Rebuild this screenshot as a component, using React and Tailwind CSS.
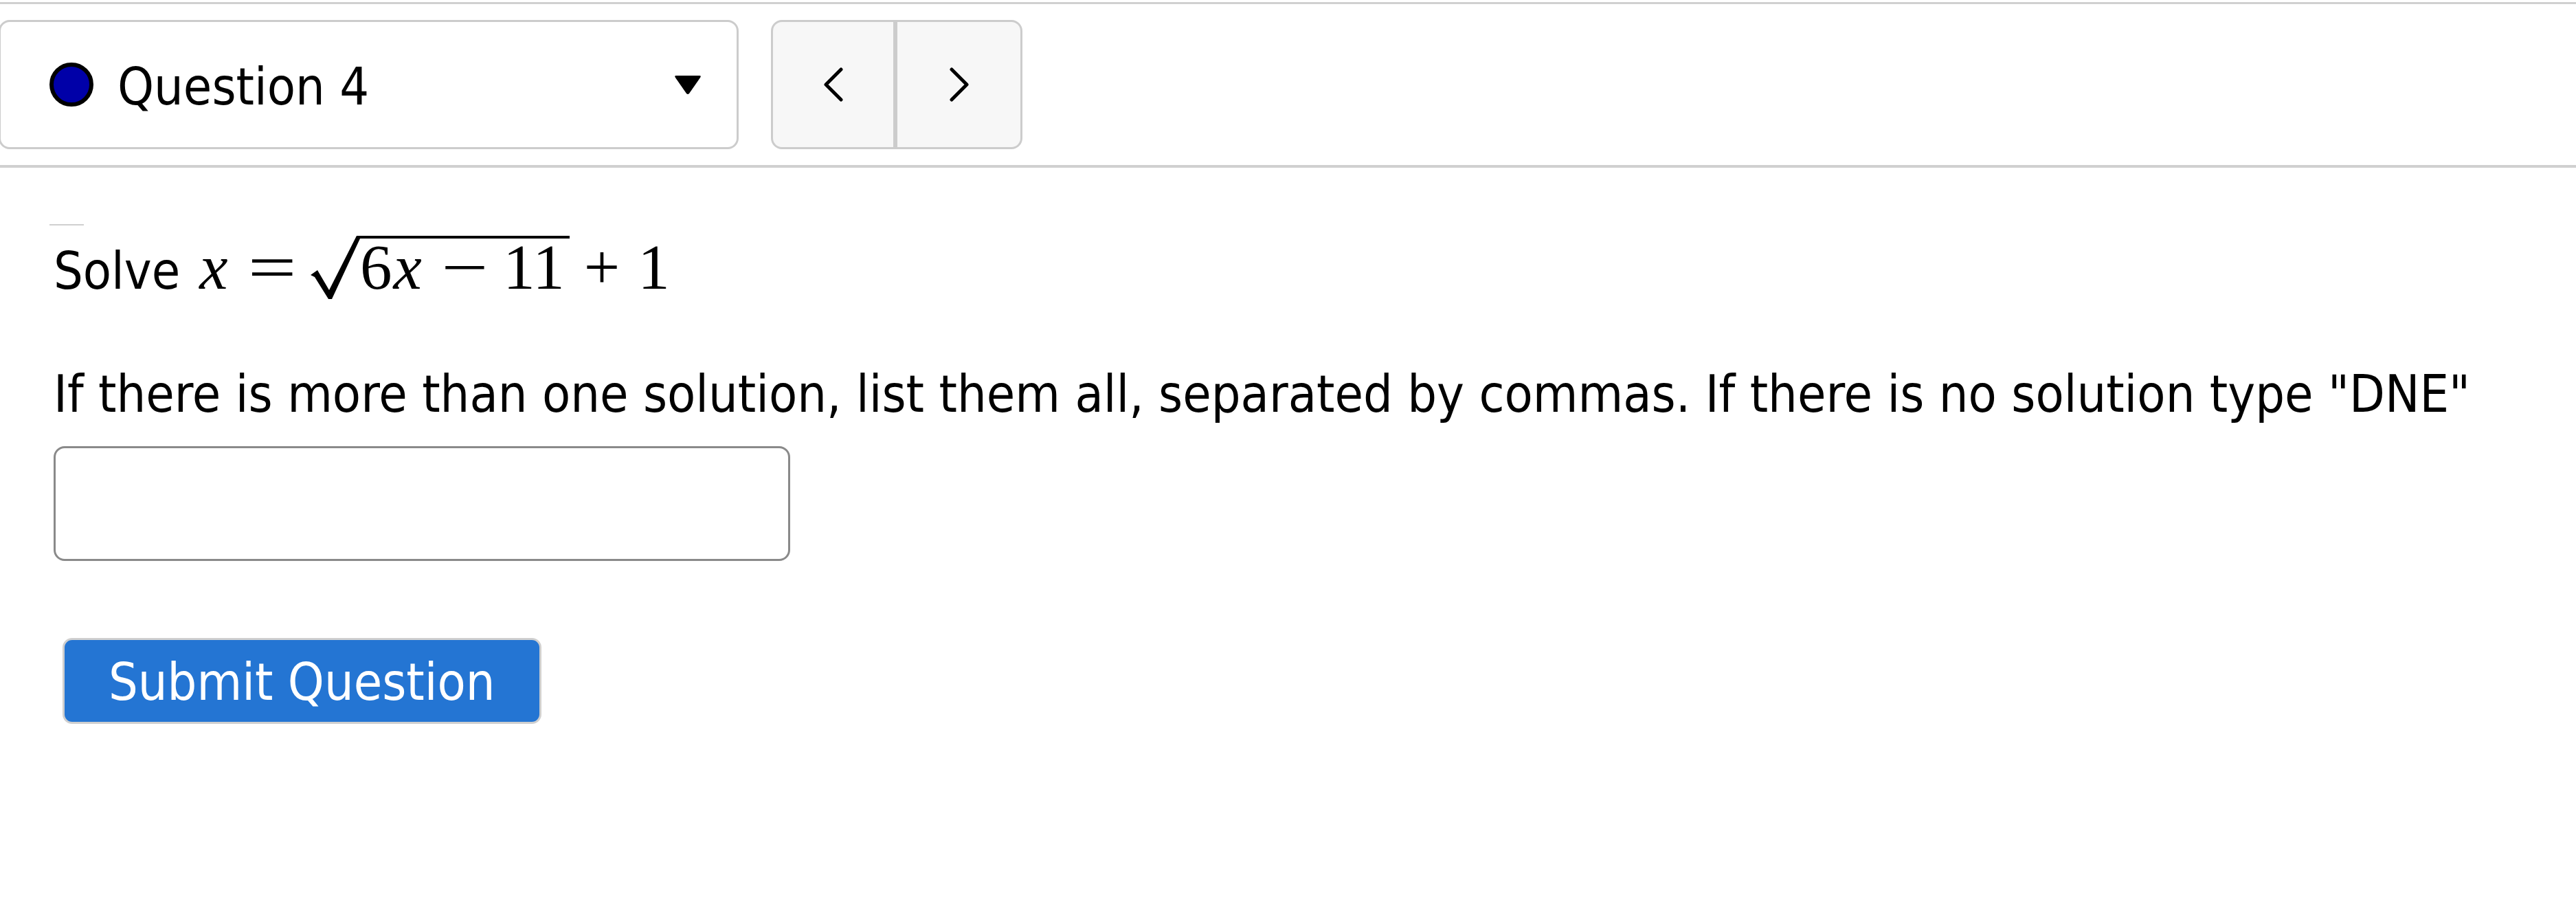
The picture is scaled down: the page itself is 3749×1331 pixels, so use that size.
import React from "react";

const Radical = () => (
  <svg viewBox="0 0 72 92" className="w-[72px] h-[92px] self-start shrink-0">
    <path d="M0 57 L10 50 L27 79 L67 0 H72 V4 L31 92 H26 L6 60 Z" fill="#000" />
  </svg>
);

const Chevron = ({ dir }) => (
  <svg viewBox="0 0 30 50" className="w-[30px] h-[50px]">
    <polyline
      points={dir === "left" ? "26,3 4,25 26,47" : "4,3 26,25 4,47"}
      fill="none"
      stroke="#000"
      strokeWidth="5"
      strokeLinecap="round"
      strokeLinejoin="round"
    />
  </svg>
);

const App = () => {
  return (
    <div className="w-[3749px] h-[1331px] bg-white overflow-hidden text-black font-['DejaVu_Sans_Condensed','DejaVu_Sans',sans-serif]">
      {/* top rule */}
      <div className="h-[3px] mt-[3px] bg-[#d0d0d0]" />

      {/* question picker + nav */}
      <div className="flex mt-[23px] h-[188px]">
        <div className="ml-[-2px] w-[1077px] h-full border-[3px] border-[#cccccc] rounded-[16px] bg-white flex items-center pl-[71px] pr-[51px]">
          <div className="w-[64px] h-[64px] rounded-full bg-[#0000a8] border-[6px] border-black shrink-0" />
          <span className="ml-[35px] mt-[6px] text-[75px] leading-none">Question 4</span>
          <svg viewBox="0 0 40 29" className="ml-auto w-[40px] h-[29px]">
            <path d="M3 1 H37 Q40 1 38 4 L22 27 Q20 29 18 27 L2 4 Q0 1 3 1 Z" fill="#000" />
          </svg>
        </div>
        <div className="ml-[47px] flex h-full">
          <button className="w-[181px] h-full bg-[#f7f7f7] border-[3px] border-[#cccccc] rounded-l-[16px] flex items-center justify-center">
            <Chevron dir="left" />
          </button>
          <button className="w-[185px] h-full bg-[#f7f7f7] border-[3px] border-[#cccccc] rounded-r-[16px] flex items-center justify-center">
            <Chevron dir="right" />
          </button>
        </div>
      </div>

      {/* header bottom rule */}
      <div className="h-[4px] mt-[23px] bg-[#d0d0d0]" />

      {/* question body */}
      <div className="pl-[78px]">
        <div className="ml-[-6px] mt-[82px] w-[50px] h-[2px] bg-[#d0d0d0]" />

        <div className="flex items-baseline mt-[15px]">
          <span className="text-[75px] leading-none">Solve</span>
          <span className="ml-[28px] font-['Liberation_Serif',serif] italic text-[93px] leading-[83px]">x</span>
          <span className="ml-[38px] inline-block scale-x-[1.35] font-['Liberation_Serif',serif] text-[93px] leading-[83px]">=</span>
          <span className="ml-[30px] inline-flex items-baseline">
            <Radical />
            <span className="border-t-[4px] border-black font-['Liberation_Serif',serif] text-[93px] leading-[83px] pr-[7px] flex items-baseline">
              <span>6</span>
              <span className="italic ml-[2px]">x</span>
              <span className="inline-block scale-x-[1.3] ml-[36px]">−</span>
              <span className="ml-[30px]">11</span>
            </span>
          </span>
          <span className="ml-[21px] font-['Liberation_Serif',serif] text-[93px] leading-[83px]">+</span>
          <span className="ml-[26px] font-['Liberation_Serif',serif] text-[93px] leading-[83px]">1</span>
        </div>

        <p className="mt-[101px] text-[75px] leading-none whitespace-nowrap">
          If there is more than one solution, list them all, separated by commas. If there is no solution type "DNE"
        </p>

        <input
          type="text"
          className="block mt-[38px] w-[1072px] h-[167px] border-[3px] border-[#8a8a8a] rounded-[16px] bg-white outline-none"
        />

        <button className="block mt-[112px] ml-[13px] h-[125px] px-[64px] pt-[4px] bg-[#2475d3] border-[3px] border-[#cfcfcf] rounded-[14px] text-white text-[75px] leading-none">
          Submit Question
        </button>
      </div>
    </div>
  );
};

export default App;
